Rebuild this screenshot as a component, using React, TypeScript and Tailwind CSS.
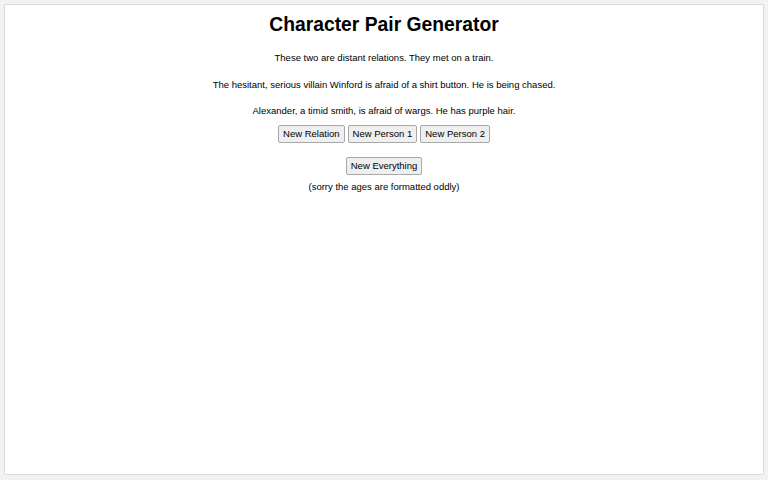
export default function App() {
  const btn =
    "bg-[#efefef] border border-[#a9a9a9] rounded-[2px] px-[4px] h-[18px] text-[9.5px] leading-none text-black";
  return (
    <div className="w-[768px] h-[480px] bg-[#f2f2f2] p-[4px] font-['Liberation_Sans',Arial,sans-serif]">
      <div className="h-[471px] w-[760px] bg-white border border-[#dcdcdc] flex flex-col items-center text-black">
        <h1 className="mt-[8px] text-[19.3px] font-bold leading-[24px]">Character Pair Generator</h1>
        <p className="mt-[15px] text-[9.5px] leading-[12px]">These two are distant relations. They met on a train.</p>
        <p className="mt-[15px] text-[9.5px] leading-[12px]">The hesitant, serious villain Winford is afraid of a shirt button. He is being chased.</p>
        <p className="mt-[14px] text-[9.5px] leading-[12px]">Alexander, a timid smith, is afraid of wargs. He has purple hair.</p>
        <div className="mt-[8px] flex gap-[3px]">
          <button className={btn}>New Relation</button>
          <button className={btn}>New Person 1</button>
          <button className={btn}>New Person 2</button>
        </div>
        <button className={btn + " mt-[14px]"}>New Everything</button>
        <p className="mt-[6px] text-[9.5px] leading-[12px]">(sorry the ages are formatted oddly)</p>
      </div>
    </div>
  );
}
